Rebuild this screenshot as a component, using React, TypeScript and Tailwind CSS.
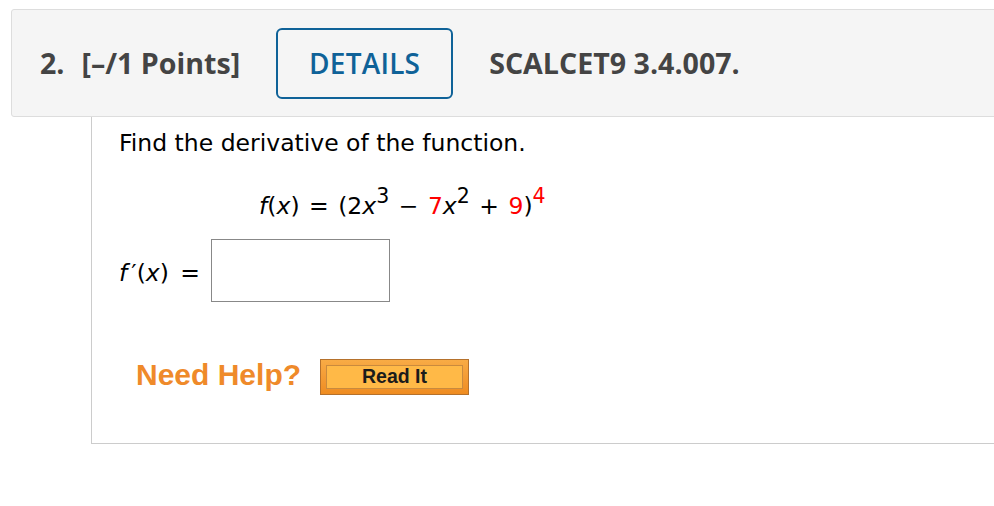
import React from 'react'

const serif = { fontFamily: '"DejaVu Sans", Verdana, sans-serif' }
const arial = { fontFamily: '"Liberation Sans", Arial, sans-serif' }

const App = () => {
  return (
    <div className="w-[994px] h-[506px] overflow-hidden bg-white">
      {/* Question header */}
      <div
        className="ml-[11px] mt-[9px] w-[1000px] h-[108px] flex items-center bg-[#f5f5f5] border border-[#dddddd] rounded-[3px] text-[#444444] font-bold text-[28.6px]"
        style={{ fontFamily: '"Open Sans", sans-serif' }}
      >
        <span className="ml-[28px]">2.</span>
        <span className="ml-[17px]">[–/1 Points]</span>
        <button
          type="button"
          className="ml-[36px] w-[177px] h-[71px] border-[2.5px] border-[#0f6298] rounded-[6px] text-[#0f6298] text-[28px] font-semibold tracking-[0.2px]"
        >
          DETAILS
        </button>
        <span className="ml-[36px]">SCALCET9 3.4.007.</span>
      </div>

      {/* Question body */}
      <div className="ml-[91px] w-[1000px] h-[327px] border-l border-b border-[#cccccc] pt-[12px]" style={serif}>
        <p className="ml-[27px] text-[23.5px] leading-[28px] text-black">Find the derivative of the function.</p>

        <div className="ml-[167px] mt-[35px] text-[23.5px] leading-[28px] text-black [word-spacing:2px]">
          <i>f</i>(<i>x</i>) = (2<i>x</i>
          <sup className="text-[20.5px] top-[-11px]">3</sup> − <span className="text-[#ff0000]">7</span>
          <i>x</i>
          <sup className="text-[20.5px] top-[-11px]">2</sup> + <span className="text-[#ff0000]">9</span>)
          <sup className="text-[20.5px] top-[-11px] text-[#ff0000]">4</sup>
        </div>

        <div className="ml-[27px] mt-[19px] flex items-end">
          <span className="w-[92px] mb-[15px] text-[23.5px] leading-[28px] text-black [word-spacing:4px]">
            <i>f</i>
            <span className="ml-[4px]">′</span>(<i>x</i>) =
          </span>
          <input type="text" className="w-[179px] h-[63px] border border-[#888888] bg-white outline-none" />
        </div>

        <div className="ml-[44px] mt-[57px] flex items-center">
          <span className="mb-[4px] text-[30px] font-bold text-[#ef8a2a] leading-none" style={arial}>
            Need Help?
          </span>
          <button
            type="button"
            className="ml-[19px] w-[149px] h-[36px] p-[5px] border border-[#b5712c] bg-gradient-to-b from-[#f8ab45] to-[#ef8c20]"
          >
            <span
              className="flex items-center justify-center w-full h-full border border-[#c98a3e] bg-[#ffb947] text-[19.5px] font-bold text-[#1b1b1b]"
              style={arial}
            >
              Read It
            </span>
          </button>
        </div>
      </div>
    </div>
  )
}

export default App
